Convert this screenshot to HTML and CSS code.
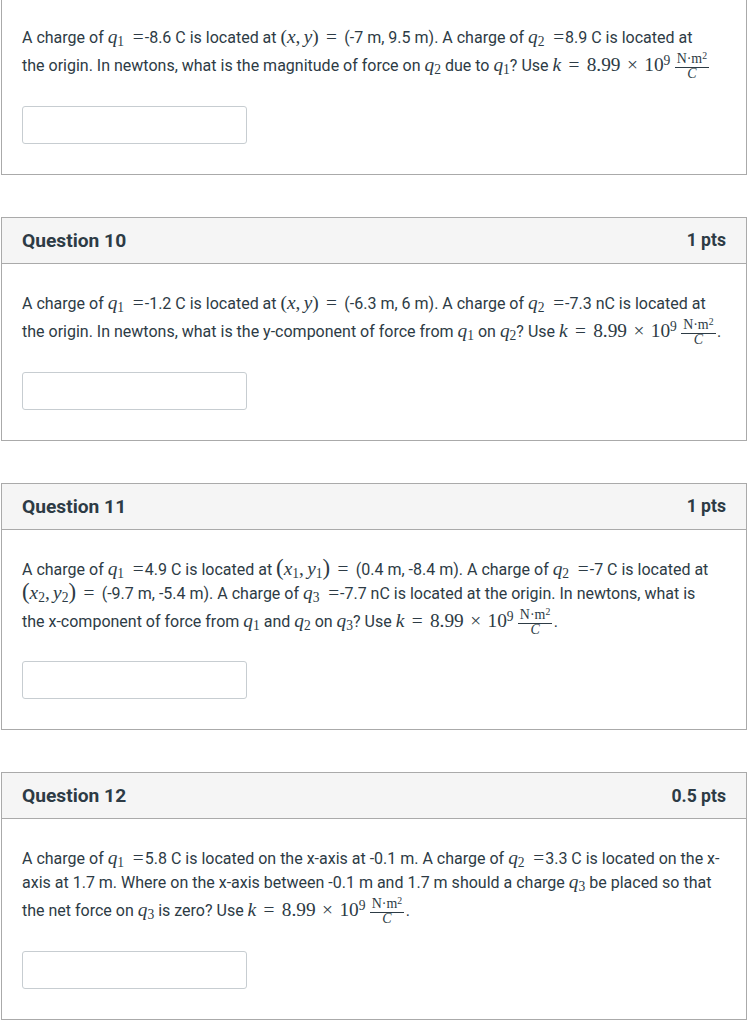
FILE: index.html
```html
<!DOCTYPE html>
<html lang="en">
<head>
<meta charset="utf-8">
<title>Quiz</title>
<link rel="stylesheet" href="styles.css">
</head>
<body>
<div class="quiz">
  <div class="question question--first">
    <div class="q-body">
      <p class="q-text">A charge of <span class="m"><span class="mi">q</span><sub>1</sub><span class="rel-end">=</span></span>-8.6 C is located at <span class="m">(<span class="mi">x</span>,<span class="thin"></span><span class="mi">y</span>)<span class="rel">=</span></span>(-7 m, 9.5 m). A charge of <span class="m"><span class="mi">q</span><sub>2</sub><span class="rel-end">=</span></span>8.9 C is located at<br>the origin. In newtons, what is the magnitude of force on <span class="m"><span class="mi">q</span><sub>2</sub></span> due to <span class="m"><span class="mi">q</span><sub>1</sub></span>? Use <span class="m"><span class="mi">k</span><span class="rel">=</span>8.99<span class="bin">×</span>10<sup>9</sup><span class="frac"><span class="num">N·m<sup>2</sup></span><span class="den">C</span></span></span></p>
      <input class="answer" type="text" aria-label="Answer">
    </div>
  </div>

  <div class="question">
    <div class="q-header"><span class="q-name">Question 10</span><span class="q-pts">1 pts</span></div>
    <div class="q-body">
      <p class="q-text">A charge of <span class="m"><span class="mi">q</span><sub>1</sub><span class="rel-end">=</span></span>-1.2 C is located at <span class="m">(<span class="mi">x</span>,<span class="thin"></span><span class="mi">y</span>)<span class="rel">=</span></span>(-6.3 m, 6 m). A charge of <span class="m"><span class="mi">q</span><sub>2</sub><span class="rel-end">=</span></span>-7.3 nC is located at<br>the origin. In newtons, what is the y-component of force from <span class="m"><span class="mi">q</span><sub>1</sub></span> on <span class="m"><span class="mi">q</span><sub>2</sub></span>? Use <span class="m"><span class="mi">k</span><span class="rel">=</span>8.99<span class="bin">×</span>10<sup>9</sup><span class="frac"><span class="num">N·m<sup>2</sup></span><span class="den">C</span></span></span>.</p>
      <input class="answer" type="text" aria-label="Answer">
    </div>
  </div>

  <div class="question">
    <div class="q-header"><span class="q-name">Question 11</span><span class="q-pts">1 pts</span></div>
    <div class="q-body">
      <p class="q-text">A charge of <span class="m"><span class="mi">q</span><sub>1</sub><span class="rel-end">=</span></span>4.9 C is located at <span class="m"><span class="big">(</span><span class="mi">x</span><sub>1</sub>,<span class="thin"></span><span class="mi">y</span><sub>1</sub><span class="big">)</span><span class="rel">=</span></span>(0.4 m, -8.4 m). A charge of <span class="m"><span class="mi">q</span><sub>2</sub><span class="rel-end">=</span></span>-7 C is located at<br><span class="m"><span class="big">(</span><span class="mi">x</span><sub>2</sub>,<span class="thin"></span><span class="mi">y</span><sub>2</sub><span class="big">)</span><span class="rel">=</span></span>(-9.7 m, -5.4 m). A charge of <span class="m"><span class="mi">q</span><sub>3</sub><span class="rel-end">=</span></span>-7.7 nC is located at the origin. In newtons, what is<br>the x-component of force from <span class="m"><span class="mi">q</span><sub>1</sub></span> and <span class="m"><span class="mi">q</span><sub>2</sub></span> on <span class="m"><span class="mi">q</span><sub>3</sub></span>? Use <span class="m"><span class="mi">k</span><span class="rel">=</span>8.99<span class="bin">×</span>10<sup>9</sup><span class="frac"><span class="num">N·m<sup>2</sup></span><span class="den">C</span></span></span>.</p>
      <input class="answer" type="text" aria-label="Answer">
    </div>
  </div>

  <div class="question">
    <div class="q-header"><span class="q-name">Question 12</span><span class="q-pts">0.5 pts</span></div>
    <div class="q-body">
      <p class="q-text">A charge of <span class="m"><span class="mi">q</span><sub>1</sub><span class="rel-end">=</span></span>5.8 C is located on the x-axis at -0.1 m. A charge of <span class="m"><span class="mi">q</span><sub>2</sub><span class="rel-end">=</span></span>3.3 C is located on the x-<br>axis at 1.7 m. Where on the x-axis between -0.1 m and 1.7 m should a charge <span class="m"><span class="mi">q</span><sub>3</sub></span> be placed so that<br>the net force on <span class="m"><span class="mi">q</span><sub>3</sub></span> is zero? Use <span class="m"><span class="mi">k</span><span class="rel">=</span>8.99<span class="bin">×</span>10<sup>9</sup><span class="frac"><span class="num">N·m<sup>2</sup></span><span class="den">C</span></span></span>.</p>
      <input class="answer" type="text" aria-label="Answer">
    </div>
  </div>
</div>
</body>
</html>
```
FILE: styles.css
```css
html, body {
  margin: 0;
  padding: 0;
  background: #ffffff;
}

body {
  font-family: Roboto, "Liberation Sans", Arial, sans-serif;
  font-size: 16px;
  color: #2d3b45;
}

.quiz {
  padding-left: 1px;
}

.question {
  width: 744px;
  border: 1px solid #aaaaaa;
  margin-bottom: 42px;
  background: #ffffff;
}

.question--first {
  margin-top: -3px;
}

.q-header {
  display: flex;
  justify-content: space-between;
  align-items: center;
  height: 45px;
  padding: 0 20px;
  background: #f5f5f5;
  border-bottom: 1px solid #aaaaaa;
  font-weight: 700;
  font-size: 19.2px;
  color: #2d3b45;
}

.q-pts {
  font-size: 17.6px;
}

.q-body {
  padding: 28px 20px 30px;
}

.q-text {
  margin: 0 0 26px;
  line-height: 24px;
}

.m {
  font-family: "Liberation Serif", "DejaVu Serif", serif;
  font-size: 1.21em;
  line-height: 1;
  white-space: nowrap;
}

.mi {
  font-style: italic;
}

.rel {
  margin: 0 0.38em;
}

.rel-end {
  margin: 0 0.05em 0 0.45em;
}

.bin {
  margin: 0 0.33em;
}

.thin {
  display: inline-block;
  width: 0.17em;
}

.m sub {
  font-size: 0.7em;
  vertical-align: -0.22em;
  line-height: 0;
  font-style: normal;
}

.m sup {
  font-size: 0.7em;
  vertical-align: 0.45em;
  line-height: 0;
}

.big {
  font-size: 1.18em;
  line-height: 0;
}

.frac {
  display: inline-flex;
  flex-direction: column;
  align-items: center;
  vertical-align: 8px;
  font-size: 0.72em;
  line-height: 1;
  padding-top: 2px;
  margin: 0 0.1em 0 0.3em;
}

.frac .num {
  font-style: normal;
  padding: 0 0.15em 1px;
  border-bottom: 1px solid currentColor;
}

.frac .num sup {
  font-size: 0.7em;
  vertical-align: 0.4em;
}

.frac .den {
  font-style: italic;
  line-height: 0.85;
}

.answer {
  display: block;
  box-sizing: border-box;
  width: 225px;
  height: 38px;
  margin: 0;
  padding: 4px 8px;
  border: 1px solid #c7cdd1;
  border-radius: 3px;
  background: #ffffff;
  font-family: inherit;
  font-size: 16px;
  color: #2d3b45;
}
```
